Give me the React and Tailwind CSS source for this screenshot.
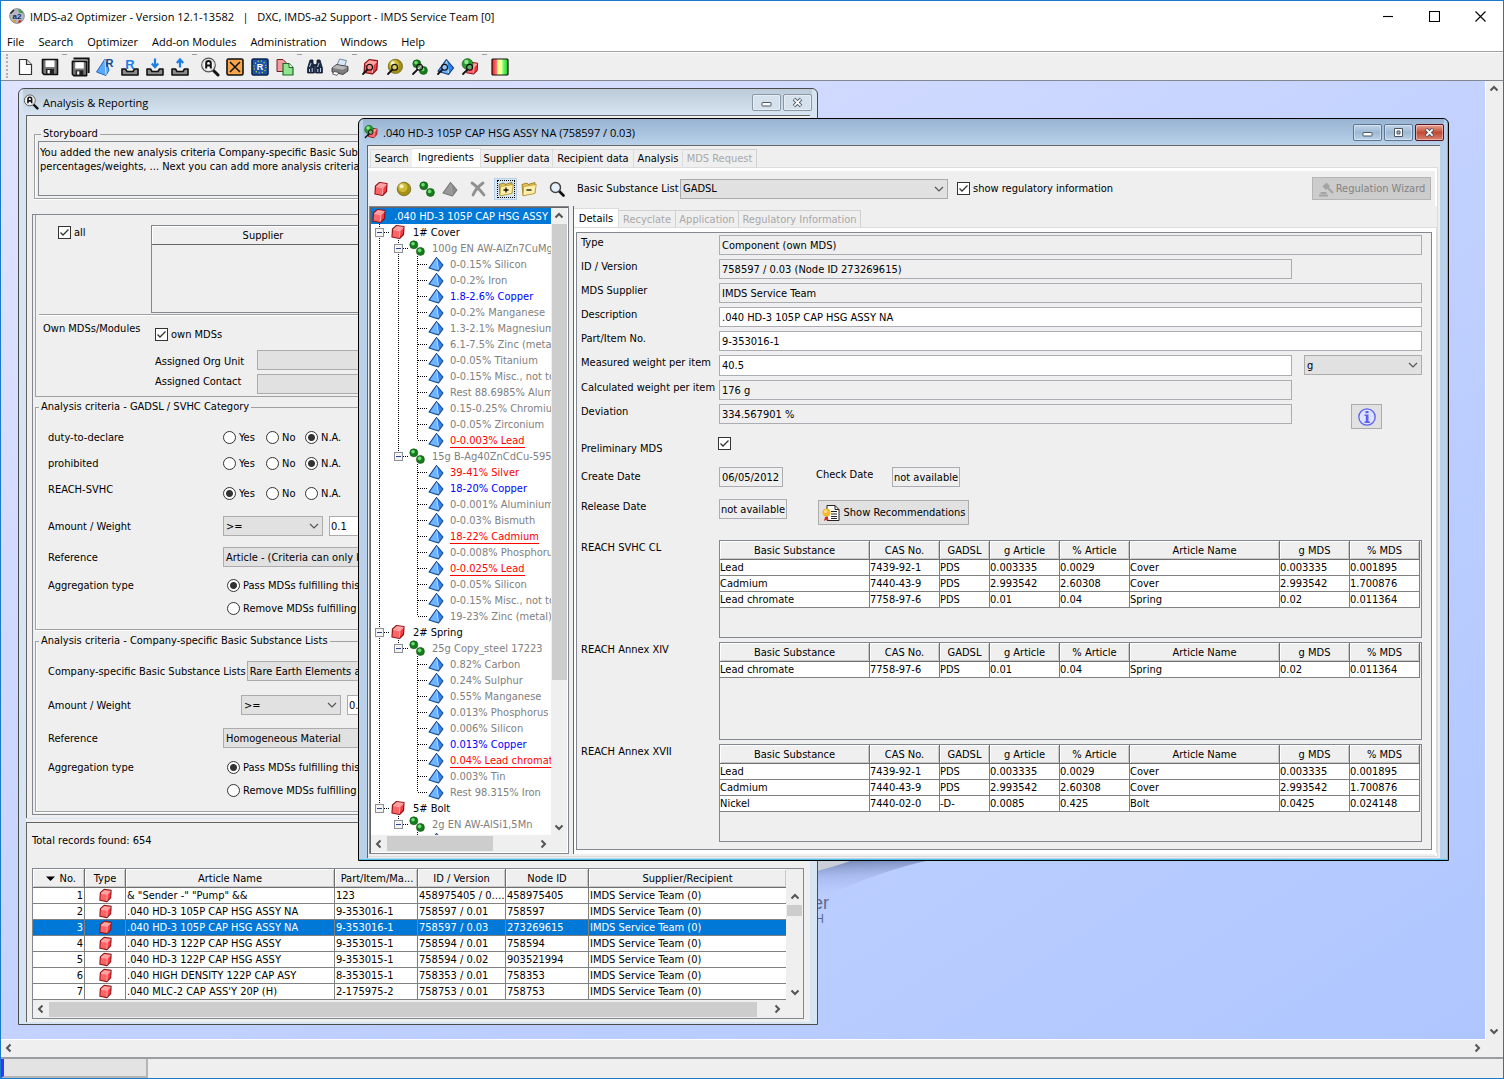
import { useState } from "react";

/* ---------- icons ---------- */

function Svg({ size = 16, box = 16, className = "", children }) {
  return (
    <svg width={size} height={size} viewBox={`0 0 ${box} ${box}`} className={`shrink-0 ${className}`} aria-hidden="true">
      {children}
    </svg>
  );
}

const CubeShape = () => (
  <g strokeLinejoin="round">
    <path d="M2.5 5 6.5 1.5 14 2.5 13.5 10.5 9.5 14.5 2 13Z" fill="#f43c42" stroke="#8e1418" strokeWidth="1.2" />
    <path d="M3.2 5.2 6.8 2.1 13.4 3.1 10 6.3Z" fill="#ffa3a3" />
    <path d="M3.2 6 9.4 7 9 13.7 2.7 12.4Z" fill="#ff6468" />
    <path d="M3.2 5.6 9.9 6.8 13.6 3.3M9.9 6.8 9.4 13.6" fill="none" stroke="#ffd0d0" strokeWidth="0.8" />
  </g>
);

const PyramidShape = ({ gray }) => (
  <g strokeLinejoin="round">
    <path d="M8.5 1.5 1 12 10.5 15 15 9Z" fill={gray ? "#8a8a8a" : "#2e86ee"} stroke={gray ? "#777" : "#1b4683"} strokeWidth="1.1" />
    <path d="M8.3 2.8 2.2 11.7 9.8 14Z" fill={gray ? "#999" : "#6fb5ff"} />
    <path d="M8.7 2.6 10.4 13.6" stroke={gray ? "#aaa" : "#d8ecff"} strokeWidth="0.9" />
  </g>
);

const BallsShape = () => (
  <g>
    <circle cx="4.8" cy="4.8" r="4" fill="#177d1c" stroke="#0c4d10" strokeWidth="0.6" />
    <circle cx="4" cy="3.8" r="1.8" fill="#6fe070" />
    <circle cx="11.4" cy="11.4" r="4" fill="#177d1c" stroke="#0c4d10" strokeWidth="0.6" />
    <circle cx="10.6" cy="10.4" r="1.8" fill="#6fe070" />
  </g>
);

const BallShape = () => (
  <g>
    <circle cx="8" cy="8" r="6.8" fill="#a39016" stroke="#5d5208" strokeWidth="0.6" />
    <circle cx="6.8" cy="6.6" r="4.6" fill="#cdbb3c" />
    <circle cx="5.6" cy="5.2" r="2" fill="#fbf6c0" />
  </g>
);

const Lens = () => (
  <g>
    <path d="M7.4 12.6 3 17" stroke="#111" strokeWidth="1.8" strokeLinecap="round" />
    <circle cx="9.6" cy="10.2" r="2.9" fill="#ffffff44" stroke="#111" strokeWidth="1.2" />
  </g>
);

const Cube = () => <Svg><CubeShape /></Svg>;
const Pyramid = ({ gray }) => <Svg><PyramidShape gray={gray} /></Svg>;
const Balls = () => <Svg><BallsShape /></Svg>;
const Ball = () => <Svg><BallShape /></Svg>;

const LensCube = () => <Svg size={20} box={20}><g transform="translate(2 1) scale(1.1)"><CubeShape /></g><Lens /></Svg>;
const LensBall = () => <Svg size={20} box={20}><g transform="translate(2 1) scale(1.05)"><BallShape /></g><Lens /></Svg>;
const LensBalls = () => <Svg size={20} box={20}><g transform="translate(2 2)"><BallsShape /></g><Lens /></Svg>;
const LensPyramid = () => <Svg size={20} box={20}><g transform="translate(2 1) scale(1.1)"><PyramidShape /></g><Lens /></Svg>;

function LensMixed({ size = 20 }) {
  return (
    <Svg size={size} box={20}>
      <g transform="translate(5 4) scale(0.9)"><CubeShape /></g>
      <circle cx="7.5" cy="7" r="5.4" fill="#2c9a30" stroke="#0c4d10" strokeWidth="0.6" />
      <circle cx="6.4" cy="5" r="2.2" fill="#8bea8b" />
      <Lens />
    </Svg>
  );
}

function ReportLens({ size = 20 }) {
  return (
    <Svg size={size} box={20}>
      <path d="M12.5 12.5 18 18" stroke="#111" strokeWidth="3" strokeLinecap="round" />
      <circle cx="8.5" cy="8" r="6.8" fill="#fff" stroke="#555" strokeWidth="1.2" />
      <circle cx="8.5" cy="8" r="5.4" fill="none" stroke="#ccc" strokeWidth="0.8" />
      <path d="M6.2 11.5V6.2Q6.2 4 8.5 4T10.8 6.2V11.5M6.2 8.6H10.8" fill="none" stroke="#111" strokeWidth="2" />
    </Svg>
  );
}

const AppLogo = () => (
  <Svg size={16}>
    <circle cx="8" cy="8" r="7.4" fill="#b4b9c0" stroke="#70757c" strokeWidth="0.7" />
    <path d="M9 1.2A7 7 0 0 1 14.4 5.4L10 4.4Z" fill="#45a049" />
    <path d="M3 12.6A7 7 0 0 0 7 15L7 12Z" fill="#d9a21b" />
    <path d="M9 15A7 7 0 0 0 13 12.8L10 12Z" fill="#c22" />
    <path d="M1.5 5.5 5 2" stroke="#222" strokeWidth="1.4" />
    <text x="8" y="11" fontSize="8" fontWeight="700" textAnchor="middle" fill="#14246b" fontFamily="Liberation Sans, sans-serif">a2</text>
  </Svg>
);

const NewDoc = () => (
  <Svg size={20} box={20}>
    <path d="M4.5 2.5H11.5L16.5 7.5V17.5H4.5Z" fill="#fff" stroke="#333" strokeWidth="1.2" />
    <path d="M11.5 2.5V7.5H16.5" fill="#ddd" stroke="#333" strokeWidth="1.2" />
  </Svg>
);

const DiskShape = () => (
  <g>
    <path d="M2.5 2.5H17.5V17.5H4L2.5 16Z" fill="#777" stroke="#111" strokeWidth="1.6" strokeLinejoin="round" />
    <path d="M5.5 3.4H14.5V10H5.5Z" fill="#fff" />
    <path d="M6 12H14V17H6Z" fill="#222" />
    <path d="M7.5 13H9.8V16.4H7.5Z" fill="#fff" />
  </g>
);
const Save = () => <Svg size={20} box={20}><DiskShape /></Svg>;
const SaveAll = () => (
  <Svg size={20} box={20}>
    <path d="M3.5 1.5H18.6V16" fill="none" stroke="#111" strokeWidth="2" />
    <g transform="translate(0 2) scale(0.95)"><DiskShape /></g>
  </Svg>
);

const PyramidR = () => (
  <Svg size={20} box={20}>
    <path d="M10 2 1.5 15 11 18.5 14 13Z" fill="#5aa9fa" stroke="#2567b5" />
    <path d="M10 2.5 11 18" stroke="#c9e4ff" />
    <text x="14.5" y="10" fontSize="11" fontWeight="700" textAnchor="middle" fill="#14497f" fontFamily="Liberation Sans, sans-serif">R</text>
  </Svg>
);

function Tray({ children }) {
  return (
    <Svg size={20} box={20}>
      <path d="M2 12H5.5L7 14.5H13L14.5 12H18V18H2Z" fill="#8c8c8c" stroke="#111" strokeWidth="1.6" strokeLinejoin="round" />
      {children}
    </Svg>
  );
}
const TrayR = () => <Tray><text x="10" y="11.5" fontSize="13" fontWeight="700" textAnchor="middle" fill="#1b7fe6" fontFamily="Liberation Sans, sans-serif">R</text></Tray>;
const TrayDown = () => <Tray><path d="M10 1.5V9M6.8 6.5 10 10 13.2 6.5" fill="none" stroke="#1b7fe6" strokeWidth="2.2" /></Tray>;
const TrayUp = () => <Tray><path d="M10 10.5V3.5M6.8 6 10 2.5 13.2 6" fill="none" stroke="#1b7fe6" strokeWidth="2.2" /></Tray>;

const OrangeX = () => (
  <Svg size={20} box={20}>
    <rect x="2" y="2" width="16" height="16" rx="1.5" fill="#f7a54a" stroke="#111" strokeWidth="1.6" />
    <path d="M5 5 15 15M15 5 5 15" stroke="#111" strokeWidth="1.5" />
  </Svg>
);
const EuR = () => (
  <Svg size={20} box={20}>
    <rect x="2" y="2" width="16" height="16" rx="1.5" fill="#1a56a8" stroke="#0c2350" strokeWidth="1.6" />
    <circle cx="10" cy="10" r="6" fill="none" stroke="#f2d63c" strokeWidth="1.1" strokeDasharray="1.1 2.04" />
    <text x="10" y="13.2" fontSize="9" fontWeight="700" textAnchor="middle" fill="#fff" fontFamily="Liberation Sans, sans-serif">R</text>
  </Svg>
);
const Docs = () => (
  <Svg size={20} box={20}>
    <path d="M2 2.5H8L11 5.5V14.5H2Z" fill="#f49aa0" stroke="#6b2327" />
    <path d="M8 6.5H14L18 10.5V18H8Z" fill="#8fe58f" stroke="#1f6b26" strokeWidth="1.2" />
    <path d="M14 6.5V10.5H18" fill="#fff" stroke="#1f6b26" />
  </Svg>
);
const Binoculars = () => (
  <Svg size={20} box={20}>
    <path d="M5 3H8V6L9.4 9V16H2.6V11ZM15 3H12V6L10.6 9V16H17.4V11Z" fill="#1c2c48" stroke="#0b1524" strokeWidth="0.8" />
    <path d="M4.5 10 6 6M14 6 12.5 10M4.5 12V15M12.8 12V15M7.2 11V15M15.5 11V15" stroke="#b8c8e6" strokeWidth="1" />
    <path d="M8.5 8H11.5" stroke="#0b1524" strokeWidth="1.6" />
  </Svg>
);
const Printer = () => (
  <Svg size={20} box={20}>
    <path d="M7 8 9.5 2 16.5 3.5 14.5 9.5Z" fill="#d8e8fa" stroke="#6d7f95" strokeWidth="0.9" />
    <path d="M2 11 6.5 7.5 18 9.5V14L13 17.5 2 15Z" fill="#7d7d7d" stroke="#3c3c3c" strokeWidth="0.9" />
    <path d="M2.5 11 6.6 8 17.4 9.9 13 12.8Z" fill="#b8b8b8" />
    <path d="M4 14.5 9 15.6 7 18.3 2.5 17Z" fill="#fff" stroke="#444" strokeWidth="0.8" />
  </Svg>
);
const Spectrum = () => (
  <Svg size={20} box={20}>
    <defs>
      <linearGradient id="spectrum">
        <stop offset="0" stopColor="#ff1414" />
        <stop offset="0.3" stopColor="#ff8080" />
        <stop offset="0.36" stopColor="#ffff70" />
        <stop offset="0.6" stopColor="#ffffb0" />
        <stop offset="0.68" stopColor="#7cff7c" />
        <stop offset="1" stopColor="#12d012" />
      </linearGradient>
    </defs>
    <rect x="2" y="2" width="16" height="16" rx="1" fill="url(#spectrum)" stroke="#111" strokeWidth="1.2" />
  </Svg>
);
const GrayX = () => (
  <Svg><path d="M2 2Q8 6 14 14M13 2Q6 7 3 14" fill="none" stroke="#909090" strokeWidth="2.8" strokeLinecap="round" /></Svg>
);
const Folder = ({ plus }) => (
  <Svg>
    <path d="M1 3.5 6 2 7 3.5 14 1.5V12L2 14.5Z" fill="#e9c65a" stroke="#8a6d1a" strokeWidth="0.8" />
    <path d="M2.5 5.5 15.3 3.5 13.8 12.5 2 14.8Z" fill="#fdeea8" stroke="#b5942f" strokeWidth="0.8" />
    <path d={plus ? "M5.5 9H10.5M8 6.5V11.5" : "M5.5 9H10.5"} stroke="#111" strokeWidth="1.3" />
  </Svg>
);
const SearchLens = () => (
  <Svg>
    <path d="M10 10 14.5 14.5" stroke="#111" strokeWidth="2.6" strokeLinecap="round" />
    <circle cx="6.5" cy="6.5" r="5" fill="#e4f1fb" stroke="#444" strokeWidth="1.5" />
  </Svg>
);
const Gavel = () => (
  <Svg>
    <path d="M4.5 5.5 8.5 1.5 12 5 8 9Z" fill="#a4a4a4" />
    <path d="M9.5 6.5 15 12" stroke="#a4a4a4" strokeWidth="2.2" />
    <path d="M1 14.5H10M2.5 12H8.5" stroke="#a4a4a4" strokeWidth="1.8" />
  </Svg>
);
const Certificate = () => (
  <Svg size={18} box={18}>
    <path d="M5 1.5H13L17 5.5V16.5H5Z" fill="#fff" stroke="#222" />
    <path d="M13 1.5V5.5H17" fill="none" stroke="#222" />
    <path d="M9 7.5H15M9 10H15M9 12.5H15M9 14.5H15" stroke="#222" />
    <circle cx="4.5" cy="8.5" r="4" fill="#f5b82a" />
    <circle cx="3.6" cy="7.4" r="1.6" fill="#fde28a" />
    <path d="M3 13 2 17 4.5 15.5 6.5 17 6 13Z" fill="#d22" />
  </Svg>
);
const Info = () => (
  <Svg size={20} box={20}>
    <circle cx="10" cy="10" r="8.2" fill="#dfe2ff" stroke="#5a62e8" strokeWidth="1.3" />
    <path d="M8.5 4H11.5V6.2H8.5ZM7.5 7.6H11.5V14.6H13V16H7.5V14.6H8.8V9H7.5Z" fill="#5a62f0" />
  </Svg>
);

const arrows = { up: "M1.5 6.5 5 3 8.5 6.5", down: "M1.5 3.5 5 7 8.5 3.5", left: "M6.5 1.5 3 5 6.5 8.5", right: "M3.5 1.5 7 5 3.5 8.5" };

/* ---------- small controls ---------- */

function Arrow({ dir, className = "" }) {
  return (
    <button type="button" aria-label={`Scroll ${dir}`} className={`flex size-4 shrink-0 items-center justify-center ${className}`}>
      <Svg size={10} box={10}><path d={arrows[dir]} fill="none" stroke="#555" strokeWidth="2" /></Svg>
    </button>
  );
}

function Select({ id, value, label, className = "" }) {
  return (
    <span className={`relative inline-block h-5 shrink-0 ${className}`}>
      <select id={id} aria-label={label} className="h-5 w-full appearance-none border border-[#acacac] bg-[#e1e1e1] pr-5 pl-[2px] text-black">
        <option>{value}</option>
      </select>
      <Svg size={10} box={10} className="pointer-events-none absolute top-[5px] right-1">
        <path d="M1 3 5 7 9 3" fill="none" stroke="#555" strokeWidth="1.2" />
      </Svg>
    </span>
  );
}

function CheckBox({ label, ariaLabel }) {
  const [on, setOn] = useState(true);
  return (
    <label className="flex items-center gap-[3px] whitespace-nowrap">
      <span className="grid size-[13px] shrink-0">
        <input type="checkbox" aria-label={ariaLabel} checked={on} onChange={() => setOn(!on)} className="size-[13px] appearance-none border border-[#333] bg-white [grid-area:1/1]" />
        {on && (
          <Svg size={13} box={13} className="pointer-events-none [grid-area:1/1]">
            <path d="M2.5 6.5 5 9 10.5 3.5" fill="none" stroke="#333" strokeWidth="1.3" />
          </Svg>
        )}
      </span>
      {label}
    </label>
  );
}

function Radio({ name, label, checked }) {
  return (
    <label className="flex items-center gap-[3px] whitespace-nowrap">
      <input type="radio" name={name} defaultChecked={checked} className="size-[13px] shrink-0 appearance-none rounded-full border border-[#333] bg-white checked:bg-[radial-gradient(circle,#333_0_3px,#fff_4px)]" />
      {label}
    </label>
  );
}

function GroupBox({ title, className = "", children }) {
  return (
    <fieldset className={`border border-[#a0a0a0] shadow-[inset_1px_0_0_#fff,0_1px_0_#fff] ${className}`}>
      <legend className="ml-[3px] px-[2px] leading-[14px]">{title}</legend>
      {children}
    </fieldset>
  );
}

function YesNo({ name, pick }) {
  return (
    <div className="grid grid-cols-[43px_39px_43px]">
      {["Yes", "No", "N.A."].map((o) => <Radio key={o} name={name} label={o} checked={o === pick} />)}
    </div>
  );
}

function Aggregation({ name }) {
  return (
    <>
      <div className="flex h-[26px] items-center">
        <span className="w-[179px]">Aggregation type</span>
        <Radio name={name} label="Pass MDSs fulfilling this criteria" checked />
      </div>
      <div className="flex h-5 items-center pl-[179px]">
        <Radio name={name} label="Remove MDSs fulfilling this criteria" />
      </div>
    </>
  );
}

function TitleButton({ kind, active }) {
  const tone = kind === "close" && active
    ? "border-[#5a1420] bg-linear-to-b from-[#e8a598] via-[#c04a32] to-[#d98070]"
    : active
      ? "border-[#5d7692] bg-linear-to-b from-[#c3d5e8] via-[#9db9d4] to-[#bcd2e8]"
      : "border-[#8b97a5] bg-[#d5e1ec]";
  return (
    <button type="button" aria-label={kind} className={`flex h-[17px] w-[29px] items-center justify-center rounded-[2px] border shadow-[inset_0_0_0_1px_#ffffff66] ${tone}`}>
      <Svg size={11} box={11}>
        {kind === "minimize" && <rect x="1" y="5.5" width="9" height="3.5" rx="0.5" fill="#fff" stroke="#4d5562" />}
        {kind === "maximize" && <path d="M1.5 1.5H9.5V9.5H1.5ZM4 4H7V7H4Z" fill="#fff" fillRule="evenodd" stroke="#4d5562" />}
        {kind === "close" && (
          <g>
            <path d="M2 2 9 9M9 2 2 9" stroke="#4d5562" strokeWidth="3.6" />
            <path d="M2.4 2.4 8.6 8.6M8.6 2.4 2.4 8.6" stroke="#fff" strokeWidth="1.8" />
          </g>
        )}
      </Svg>
    </button>
  );
}

const headCell = "h-[19px] truncate border-r border-b border-[#6f6f6f] bg-[#efefef] px-1 text-center font-normal shadow-[inset_1px_1px_0_#fff,inset_-1px_-1px_0_#c8c8c8]";

/* ---------- Analysis & Reporting window ---------- */

const records = [
  ["& \"Sender -\" \"Pump\" &&", "123", "458975405 / 0.01", "458975405"],
  [".040 HD-3 105P CAP HSG ASSY NA", "9-353016-1", "758597 / 0.01", "758597"],
  [".040 HD-3 105P CAP HSG ASSY NA", "9-353016-1", "758597 / 0.03", "273269615"],
  [".040 HD-3 122P CAP HSG ASSY", "9-353015-1", "758594 / 0.01", "758594"],
  [".040 HD-3 122P CAP HSG ASSY", "9-353015-1", "758594 / 0.02", "903521994"],
  [".040 HIGH DENSITY 122P CAP ASY", "8-353015-1", "758353 / 0.01", "758353"],
  [".040 MLC-2 CAP ASS'Y 20P (H)", "2-175975-2", "758753 / 0.01", "758753"],
];

function ResultTable() {
  return (
    <div className="border border-[#828790]">
      <div className="flex">
        <div className="min-w-0 flex-1">
          <table className="w-full table-fixed border-separate border-spacing-0 bg-white">
            <colgroup>
              <col className="w-[52px]" />
              <col className="w-[41px]" />
              <col className="w-[209px]" />
              <col className="w-[83px]" />
              <col className="w-[88px]" />
              <col className="w-[83px]" />
              <col />
            </colgroup>
            <thead>
              <tr>
                <th className={headCell}>
                  <span className="flex items-center justify-end gap-[5px] pr-1">
                    <Svg size={9} box={9}><path d="M0 2.5H9L4.5 7Z" /></Svg>No.
                  </span>
                </th>
                {["Type", "Article Name"].map((h) => <th key={h} className={headCell}>{h}</th>)}
                <th className={`${headCell} pr-0 pl-[2px]`}>Part/Item/Ma...</th>
                {["ID / Version", "Node ID"].map((h) => <th key={h} className={headCell}>{h}</th>)}
                <th className={`${headCell} border-r-0`}>Supplier/Recipient</th>
              </tr>
            </thead>
            <tbody>
              {records.map((r, i) => (
                <tr key={i} className={i === 2 ? "bg-[#0078d7] text-white" : ""}>
                  <td className="h-4 border-r border-b border-[#808080] pr-px text-right">{i + 1}</td>
                  <td className="h-4 border-r border-b border-[#808080]">
                    <div className="flex h-[15px] items-center justify-center"><Svg size={15}><CubeShape /></Svg></div>
                  </td>
                  {r.map((c, k) => (
                    <td key={k} className="h-4 truncate border-r border-b border-[#808080] pl-px">{c}</td>
                  ))}
                  <td className="h-4 border-b border-[#808080] pl-px">IMDS Service Team (0)</td>
                </tr>
              ))}
            </tbody>
          </table>
        </div>
        <div className="flex w-[17px] flex-col items-center bg-[#efefef] pt-5">
          <Arrow dir="up" />
          <div className="h-[11px] w-[15px] bg-[#cdcdcd]" />
          <Arrow dir="down" className="mt-auto" />
        </div>
      </div>
      <div className="flex h-[18px] items-center bg-[#efefef]">
        <Arrow dir="left" />
        <div className="h-[15px] flex-1 bg-[#cdcdcd]" />
        <Arrow dir="right" className="mr-[18px] ml-3" />
      </div>
    </div>
  );
}

function AnalysisWindow() {
  return (
    <section className="absolute top-[7px] left-[17px] flex h-[937px] w-[800px] flex-col rounded-t-[6px] border border-[#4b4b4b] bg-[#d7e4f2] pr-[7px] pb-[2px] pl-[7px]">
      <header className="-mr-[2px] -ml-[3px] flex h-[26px] shrink-0 items-center bg-linear-to-b from-[#bccbd9] to-[#d7e4f2]">
        <ReportLens size={16} />
        <h2 className="ml-1 flex-1 font-['Open_Sans','Noto_Sans',sans-serif]">Analysis &amp; Reporting</h2>
        <span className="flex gap-[2px]">
          <TitleButton kind="minimize" />
          <TitleButton kind="close" />
        </span>
      </header>
      <div className="overflow-hidden border-t border-l border-[#646464] bg-[#efefef] pt-[11px] pb-[3px]">
        <GroupBox title="Storyboard" className="mr-1 ml-[7px] px-[3px] pb-[2px]">
          <textarea
            readOnly
            aria-label="Storyboard"
            rows={3}
            className="block h-[55px] w-full resize-none overflow-hidden border border-[#828790] bg-transparent px-px py-1 leading-[14px] whitespace-pre"
            value={"You added the new analysis criteria Company-specific Basic Substance Lists\npercentages/weights, ... Next you can add more analysis criteria or start"}
          />
        </GroupBox>

        <div className="mt-[15px] mr-1 ml-[5px] border border-[#828790] pb-[2px] pl-[2px]">
          <div className="border-b border-l border-[#a0a0a0]">
            <div className="ml-[3px] flex h-[100px] items-start border-b border-[#a0a0a0] pt-[10px] shadow-[0_1px_0_#fff]">
              <div className="ml-[19px] w-[93px]"><CheckBox label="all" /></div>
              <table className="h-[88px] flex-1 border-separate border-spacing-0 border border-[#828790]">
                <thead>
                  <tr>
                    <th className="h-[19px] w-[222px] border-b border-[#646464] text-center font-normal shadow-[inset_1px_1px_0_#fff]">Supplier</th>
                    <th className="h-[19px] border-b border-l border-[#646464] font-normal">Org Unit</th>
                  </tr>
                </thead>
                <tbody><tr><td colSpan={2} /></tr></tbody>
              </table>
            </div>
            <div className="flex pt-[6px] pb-[2px] pl-[7px]">
              <span className="w-[112px]">Own MDSs/Modules</span>
              <div className="flex-1">
                <div className="pt-[6px] pb-2"><CheckBox label="own MDSs" /></div>
                <label className="flex h-6 items-start">
                  <span className="w-[102px] pt-1">Assigned Org Unit</span>
                  <input disabled className="h-5 flex-1 border border-[#acacac] bg-[#e1e1e1]" />
                </label>
                <label className="flex h-5 items-start">
                  <span className="w-[102px]">Assigned Contact</span>
                  <input disabled className="h-5 flex-1 border border-[#acacac] bg-[#e1e1e1]" />
                </label>
              </div>
            </div>
          </div>

          <GroupBox title="Analysis criteria - GADSL / SVHC Category" className="mt-[3px]">
            <div className="pt-[10px] pb-[11px] pl-3">
              <div className="flex h-[26px] items-center"><span className="w-[175px]">duty-to-declare</span><YesNo name="duty" pick="N.A." /></div>
              <div className="flex h-[26px] items-center"><span className="w-[175px]">prohibited</span><YesNo name="prohibited" pick="N.A." /></div>
              <div className="flex h-[34px] items-center"><span className="w-[175px] pb-2">REACH-SVHC</span><YesNo name="svhc" pick="Yes" /></div>
              <div className="flex h-8 items-center">
                <span className="w-[175px]">Amount / Weight</span>
                <Select value=">=" label="Amount operator" className="w-[100px]" />
                <input aria-label="Amount" defaultValue="0.1" className="ml-[6px] h-5 w-20 border border-[#acacac] bg-white px-px" />
              </div>
              <div className="flex h-[30px] items-center">
                <span className="w-[175px]">Reference</span>
                <Select value="Article - (Criteria can only be applied to articles)" label="Reference" className="w-[300px]" />
              </div>
              <Aggregation name="agg1" />
            </div>
          </GroupBox>

          <GroupBox title="Analysis criteria - Company-specific Basic Substance Lists" className="mt-1">
            <div className="pt-2 pb-[11px] pl-3">
              <div className="flex h-[30px] items-center">
                <span className="pr-px whitespace-nowrap">Company-specific Basic Substance Lists</span>
                <Select value="Rare Earth Elements and others" label="Company list" className="w-[300px]" />
              </div>
              <div className="flex h-[38px] items-center">
                <span className="w-[193px]">Amount / Weight</span>
                <Select value=">=" label="Weight operator" className="w-[100px]" />
                <input aria-label="Weight" defaultValue="0.1" className="ml-[6px] h-5 w-20 border border-[#acacac] bg-white px-px" />
              </div>
              <div className="mb-[2px] flex h-7 items-center">
                <span className="w-[175px]">Reference</span>
                <Select value="Homogeneous Material" label="Material reference" className="w-[300px]" />
              </div>
              <Aggregation name="agg2" />
            </div>
          </GroupBox>
        </div>
      </div>
      <div className="mt-1 flex-1 border-t border-l border-[#646464] bg-[#efefef] pr-[6px] pl-[5px] shadow-[0_-3px_0_#efefef]">
        <p className="pt-[10px] pb-5">Total records found: 654</p>
        <ResultTable />
      </div>
    </section>
  );
}

/* ---------- ingredients tree ---------- */

const tree = [
  ["1# Cover", [
    ["100g EN AW-AlZn7CuMg", ["0-0.15% Silicon", "0-0.2% Iron", "b:1.8-2.6% Copper", "0-0.2% Manganese", "1.3-2.1% Magnesium", "6.1-7.5% Zinc (metal)", "0-0.05% Titanium", "0-0.15% Misc., not to declare", "Rest 88.6985% Aluminium", "0.15-0.25% Chromium", "0-0.05% Zirconium", "u:0-0.003% Lead"]],
    ["15g B-Ag40ZnCdCu-595/630", ["r:39-41% Silver", "b:18-20% Copper", "0-0.001% Aluminium", "0-0.03% Bismuth", "u:18-22% Cadmium", "0-0.008% Phosphorus", "u:0-0.025% Lead", "0-0.05% Silicon", "0-0.15% Misc., not to declare", "19-23% Zinc (metal)"]],
  ]],
  ["2# Spring", [
    ["25g Copy_steel 17223", ["0.82% Carbon", "0.24% Sulphur", "0.55% Manganese", "0.013% Phosphorus", "0.006% Silicon", "b:0.013% Copper", "u:0.04% Lead chromate", "0.003% Tin", "Rest 98.315% Iron"]],
  ]],
  ["5# Bolt", [
    ["2g EN AW-AlSi1,5Mn", ["0.5% Silicon"]],
  ]],
];

const tones = {
  b: "text-[#0000ff]",
  r: "text-[#ff0000]",
  u: "text-[#ff0000] border-b border-[#ff0000]",
};

// one 19px step of the tree's dotted guide lines
function Guide({ node, line, last, box }) {
  return (
    <svg width="19" height="16" className="shrink-0" shapeRendering="crispEdges" aria-hidden="true">
      <g stroke="#000" strokeDasharray="1 1">
        {line && <path d="M8.5 0V16" />}
        {node && <path d={last ? "M8.5 0V8" : "M8.5 0V16"} />}
        {node && <path d="M9 8.5H18" />}
      </g>
      {box && (
        <g>
          <rect x="4.5" y="4.5" width="8" height="8" fill="#f4f4f4" stroke="#8b9097" />
          <path d="M6 8.5H11" stroke="#24479b" />
        </g>
      )}
    </svg>
  );
}

function Tree() {
  const rows = [];
  tree.forEach(([part, mats], i) => {
    const lastPart = i === tree.length - 1;
    rows.push(
      <li key={part} className="flex h-4 items-center">
        <Guide node box last={lastPart} /><Cube /><span className="ml-[7px]">{part}</span>
      </li>
    );
    mats.forEach(([mat, subs], j) => {
      const lastMat = j === mats.length - 1;
      rows.push(
        <li key={part + mat} className="flex h-4 items-center text-[#808080]">
          <Guide line={!lastPart} /><Guide node box last={lastMat} /><Balls /><span className="ml-[7px]">{mat}</span>
        </li>
      );
      subs.forEach((s, k) => {
        const coded = s[1] === ":";
        rows.push(
          <li key={part + mat + s} className="flex h-4 items-center text-[#808080]">
            <Guide line={!lastPart} /><Guide line={!lastMat} /><Guide node last={k === subs.length - 1} />
            <Pyramid />
            <span className={`ml-[6px] h-[15px] ${coded ? tones[s[0]] : ""}`}>{coded ? s.slice(2) : s}</span>
          </li>
        );
      });
    });
  });
  return (
    <div className="flex w-[200px] shrink-0 flex-col border border-[#828790] bg-white p-px shadow-[inset_1px_1px_0_#646464]">
      <div className="flex min-h-0 flex-1">
        <ul className="min-w-0 flex-1 overflow-hidden whitespace-nowrap">
          <li className="flex h-4 items-center bg-[#0078d7] text-white">
            <Cube /><span className="ml-[7px]">.040 HD-3 105P CAP HSG ASSY NA</span>
          </li>
          {rows}
        </ul>
        <div className="flex w-4 flex-col items-center bg-[#efefef]">
          <Arrow dir="up" />
          <div className="h-[456px] w-[15px] bg-[#cdcdcd]" />
          <Arrow dir="down" className="mt-auto" />
        </div>
      </div>
      <div className="flex h-[17px] items-center bg-[#efefef]">
        <Arrow dir="left" />
        <div className="h-[15px] w-[106px] bg-[#cdcdcd]" />
        <Arrow dir="right" className="mr-4 ml-auto" />
      </div>
    </div>
  );
}

/* ---------- details ---------- */

function Field({ label, value, editable, short, side, rowClass = "h-6", inputClass = "h-5" }) {
  return (
    <div className={`flex items-start ${rowClass}`}>
      <label className="flex min-w-0 flex-1">
        <span className="w-[138px] shrink-0 whitespace-nowrap">{label}</span>
        <input readOnly={!editable} defaultValue={value} className={`min-w-0 flex-1 border border-[#abadb3] px-[2px] ${inputClass} ${editable ? "bg-white" : "bg-[#efefef]"}`} />
      </label>
      {short && <div className="w-[130px] shrink-0 pl-3">{side}</div>}
    </div>
  );
}

const columns = ["Basic Substance", "CAS No.", "GADSL", "g Article", "% Article", "Article Name", "g MDS", "% MDS"];

const reach = [
  ["REACH SVHC CL", [
    ["Lead", "7439-92-1", "PDS", "0.003335", "0.0029", "Cover", "0.003335", "0.001895"],
    ["Cadmium", "7440-43-9", "PDS", "2.993542", "2.60308", "Cover", "2.993542", "1.700876"],
    ["Lead chromate", "7758-97-6", "PDS", "0.01", "0.04", "Spring", "0.02", "0.011364"],
  ]],
  ["REACH Annex XIV", [
    ["Lead chromate", "7758-97-6", "PDS", "0.01", "0.04", "Spring", "0.02", "0.011364"],
  ]],
  ["REACH Annex XVII", [
    ["Lead", "7439-92-1", "PDS", "0.003335", "0.0029", "Cover", "0.003335", "0.001895"],
    ["Cadmium", "7440-43-9", "PDS", "2.993542", "2.60308", "Cover", "2.993542", "1.700876"],
    ["Nickel", "7440-02-0", "-D-", "0.0085", "0.425", "Bolt", "0.0425", "0.024148"],
  ]],
];

function ReachTable({ title, rows }) {
  return (
    <div className="flex">
      <h4 className="w-[138px] shrink-0">{title}</h4>
      <div className="h-[98px] min-w-0 flex-1 border border-[#828790] pr-px">
        <table aria-label={title} className="w-full table-fixed border-separate border-spacing-0">
          <colgroup>
            <col className="w-[150px]" />
            <col className="w-[70px]" />
            <col className="w-[50px]" />
            <col className="w-[70px]" />
            <col className="w-[70px]" />
            <col />
            <col className="w-[70px]" />
            <col className="w-[70px]" />
          </colgroup>
          <thead>
            <tr>{columns.map((c) => <th key={c} className={headCell}>{c}</th>)}</tr>
          </thead>
          <tbody>
            {rows.map((r) => (
              <tr key={r[0]} className="bg-white">
                {r.map((c, i) => <td key={i} className="h-4 truncate border-r border-b border-[#808080]">{c}</td>)}
              </tr>
            ))}
          </tbody>
        </table>
      </div>
    </div>
  );
}

function Details() {
  return (
    <div className="min-w-0 flex-1 border-l border-[#646464] bg-white">
      <nav className="flex h-[21px] items-end bg-[#efefef] pt-[2px]" role="tablist">
        <button role="tab" aria-selected="true" className="h-[19px] w-[45px] border-t border-r border-[#dcdcdc] bg-white">Details</button>
        {[["Recyclate", "w-[57px]"], ["Application", "w-[63px]"], ["Regulatory Information", "w-[122px]"]].map(([t, w]) => (
          <button key={t} role="tab" disabled className={`h-[17px] border-t border-r border-[#d0d0d0] whitespace-nowrap text-[#a8a8a8] ${w}`}>{t}</button>
        ))}
      </nav>
      <div className="border-t border-r border-[#dcdcdc] bg-white pt-1 pr-1 pb-[3px] pl-[2px]">
        <div className="border border-[#828790] bg-[#efefef] pt-[2px] pr-[9px] pb-[7px] pl-1">
          <Field label="Type" value="Component (own MDS)" />
          <Field label="ID / Version" value="758597 / 0.03 (Node ID 273269615)" short />
          <Field label="MDS Supplier" value="IMDS Service Team" />
          <Field label="Description" value=".040 HD-3 105P CAP HSG ASSY NA" editable />
          <Field label="Part/Item No." value="9-353016-1" editable />
          <Field label="Measured weight per item" value="40.5" editable short rowClass="h-[25px]" inputClass="h-[21px]" side={<Select value="g" label="Unit" className="w-full" />} />
          <Field label="Calculated weight per item" value="176 g" short />
          <Field
            label="Deviation"
            value="334.567901 %"
            short
            rowClass="h-[33px]"
            side={
              <button type="button" aria-label="Information" className="ml-[47px] flex h-[25px] w-[31px] items-center justify-center border border-[#acacac] bg-[#e1e1e1]">
                <Info />
              </button>
            }
          />
          <div className="flex h-[30px] items-start">
            <span className="w-[137px] pt-1">Preliminary MDS</span>
            <CheckBox ariaLabel="Preliminary MDS" />
          </div>
          <div className="flex h-8 items-start">
            <span className="w-[138px] pt-[2px]">Create Date</span>
            <input readOnly aria-label="Create Date" value="06/05/2012" className="h-5 w-16 border border-[#abadb3] px-[2px]" />
            <span className="ml-[33px] w-[76px]">Check Date</span>
            <input readOnly aria-label="Check Date" value="not available" className="h-5 w-[68px] border border-[#abadb3] px-px" />
          </div>
          <div className="flex h-[41px] items-start">
            <span className="w-[138px]">Release Date</span>
            <input readOnly aria-label="Release Date" value="not available" className="h-5 w-[68px] border border-[#abadb3] px-px" />
            <button type="button" className="mt-px ml-[31px] flex h-[25px] w-[151px] items-center justify-center gap-1 border border-[#acacac] bg-[#e1e1e1] whitespace-nowrap">
              <Certificate />Show Recommendations
            </button>
          </div>
          <div className="flex flex-col gap-1">
            {reach.map(([title, rows]) => <ReachTable key={title} title={title} rows={rows} />)}
          </div>
        </div>
      </div>
    </div>
  );
}

function IconButton({ label, active, className = "", children }) {
  return (
    <button type="button" aria-label={label} className={`flex h-[22px] w-[23px] items-center justify-center ${active ? "border border-[#b5d0e8] bg-[#d5e6f5] p-[2px]" : ""} ${className}`}>
      {active ? <span className="border border-dotted border-black">{children}</span> : children}
    </button>
  );
}

function DatasheetWindow() {
  return (
    <section className="absolute top-[37px] left-[357px] flex h-[743px] w-[1091px] flex-col rounded-t-[6px] border border-black bg-[#b9d1ea] pr-2 pb-[2px] pl-2 shadow-[inset_-1px_-1px_0_#4fc3e8]">
      <header className="-mr-1 -ml-1 flex h-[26px] shrink-0 items-center bg-linear-to-b from-[#98b4d2] to-[#b9d1ea]">
        <LensMixed size={16} />
        <h2 className="ml-1 flex-1 font-['Open_Sans','Noto_Sans',sans-serif]">.040 HD-3 105P CAP HSG ASSY NA (758597 / 0.03)</h2>
        <span className="flex gap-[2px]">
          <TitleButton kind="minimize" active />
          <TitleButton kind="maximize" active />
          <TitleButton kind="close" active />
        </span>
      </header>
      <div className="flex min-h-0 flex-1 flex-col border-t border-l border-[#646464] bg-[#efefef] pr-[2px] pb-px">
        <nav className="flex h-[21px] items-end pl-[2px]" role="tablist">
          <button role="tab" className="h-[18px] w-[42px] border-t border-l border-[#dcdcdc]">Search</button>
          <button role="tab" aria-selected="true" className="-mb-px h-5 w-[69px] border-t border-r border-[#dcdcdc] bg-white pb-[2px]">Ingredients</button>
          {[["Supplier data", "w-[72px]"], ["Recipient data", "w-[81px]"], ["Analysis", "w-[49px]"]].map(([t, w]) => (
            <button key={t} role="tab" className={`h-[18px] border-t border-r border-[#dcdcdc] whitespace-nowrap ${w}`}>{t}</button>
          ))}
          <button role="tab" disabled className="h-[18px] w-[74px] border-t border-r border-[#d0d0d0] whitespace-nowrap text-[#a8a8a8]">MDS Request</button>
        </nav>
        <div className="flex min-h-0 flex-1 flex-col border-t border-r border-b border-[#dcdcdc] bg-[#efefef] pb-[2px] pl-px shadow-[inset_0_3px_0_#fff,inset_-2px_0_0_#fff]">
          <div className="flex h-[38px] shrink-0 items-center pt-[3px] pr-[6px]">
            <IconButton label="Add component"><Cube /></IconButton>
            <IconButton label="Add semi-component"><Ball /></IconButton>
            <IconButton label="Add material"><Balls /></IconButton>
            <IconButton label="Add substance"><Pyramid gray /></IconButton>
            <IconButton label="Delete" className="ml-[5px]"><GrayX /></IconButton>
            <IconButton label="Expand all" active className="ml-[5px]"><Folder plus /></IconButton>
            <IconButton label="Collapse all"><Folder /></IconButton>
            <IconButton label="Find" className="ml-[5px]"><SearchLens /></IconButton>
            <label htmlFor="bsl" className="ml-[9px] w-[103px] whitespace-nowrap">Basic Substance List</label>
            <Select id="bsl" value="GADSL" className="mr-[9px] w-[268px]" />
            <CheckBox label="show regulatory information" />
            <button type="button" disabled className="ml-auto flex h-[23px] w-[119px] items-center justify-center gap-[2px] border border-[#b5b5b5] bg-[#cccccc] whitespace-nowrap text-[#838383]">
              <Gavel />Regulation Wizard
            </button>
          </div>
          <div className="flex min-h-0 flex-1 gap-1">
            <Tree />
            <Details />
          </div>
        </div>
      </div>
    </section>
  );
}

/* ---------- main frame ---------- */

const toolGroups = [
  [["New", NewDoc], ["Save", Save]],
  [["Save all", SaveAll], ["Release", PyramidR], ["Release to tray", TrayR], ["Import", TrayDown], ["Export", TrayUp]],
  [["Analysis", ReportLens], ["Exclude", OrangeX], ["REACH", EuR], ["Compare", Docs]],
  [["Find", Binoculars], ["Print", Printer]],
  [["Search component", LensCube], ["Search semi-component", LensBall], ["Search material", LensBalls], ["Search substance", LensPyramid], ["Search all", LensMixed]],
  [["Colours", Spectrum]],
];

const menus = ["File", "Search", "Optimizer", "Add-on Modules", "Administration", "Windows", "Help"];

export default function App() {
  return (
    <div className="flex h-screen flex-col overflow-hidden border border-[#1979ca] bg-[#efefef] font-['DejaVu_Sans_Condensed','DejaVu_Sans',sans-serif] text-[11px] leading-[15px] text-black">
      <header className="flex h-[30px] shrink-0 items-center bg-white pl-2 font-['Open_Sans','Noto_Sans',sans-serif]">
        <AppLogo />
        <h1 className="ml-[5px] flex-1 whitespace-pre">IMDS-a2 Optimizer - Version 12.1-13582   |   DXC, IMDS-a2 Support - IMDS Service Team [0]</h1>
        {["M0 5.5H10", "M0.5 0.5H10.5V10.5H0.5Z", "M0.5 0.5 10.5 10.5M10.5 0.5 0.5 10.5"].map((d, i) => (
          <button key={d} type="button" aria-label={["Minimize", "Maximize", "Close"][i]} className="flex h-full w-[46px] items-center justify-center">
            <Svg size={11} box={11}><path d={d} fill="none" stroke="#000" strokeWidth="1.1" /></Svg>
          </button>
        ))}
      </header>
      <nav className="flex h-[21px] shrink-0 items-center gap-[14px] border-b border-[#a0a0a0] bg-white pl-[6px] font-['Open_Sans','Noto_Sans',sans-serif]">
        {menus.map((m) => <button key={m} type="button">{m}</button>)}
      </nav>
      <div className="flex h-[29px] shrink-0 items-center border-b border-[#828790] pl-[5px] shadow-[inset_0_1px_0_#fff]">
        <span className="mr-1 h-6 border-l-2 border-dotted border-[#b0b0b0]" />
        {toolGroups.map((group, i) => (
          <div key={i} className="flex h-full items-center">
            {i > 0 && <span className="h-full w-[5px] pt-[2px]"><span className="block h-px bg-[#a0a0a0]" /></span>}
            {group.map(([label, Icon]) => (
              <button key={label} type="button" aria-label={label} title={label} className="flex h-full w-[25px] items-center justify-center pt-[2px]">
                <Icon />
              </button>
            ))}
          </div>
        ))}
      </div>
      <main className="grid min-h-0 flex-1 grid-cols-[1fr_18px] grid-rows-[1fr_18px]">
        <div className="relative overflow-hidden bg-linear-to-br from-[#e1e4ff] via-[#c3d2ff] to-[#aec6ff]">
          <div className="absolute top-[779px] left-[780px] text-[#5f6b8c]">
            <svg width="260" height="60" className="block" aria-hidden="true">
              <defs>
                <linearGradient id="shade" x1="0.2" y1="0" x2="0.35" y2="1">
                  <stop offset="0" stopColor="#6f7fae" />
                  <stop offset="0.4" stopColor="#9fb0e4" stopOpacity="0.7" />
                  <stop offset="1" stopColor="#bccdff" stopOpacity="0" />
                </linearGradient>
              </defs>
              <path d="M0 0H150Q100 10 36 40H0Z" fill="url(#shade)" />
              <path d="M0 0H72Q56 6 36 11L0 16Z" fill="#c9ced9" />
            </svg>
            <p className="-mt-[26px] w-[48px] text-right font-['Liberation_Sans',sans-serif] text-[18px] leading-[18px]">er</p>
            <p className="w-[43px] text-right font-['Liberation_Sans',sans-serif] text-[12px]">H</p>
          </div>
          <AnalysisWindow />
          <DatasheetWindow />
        </div>
        <div className="flex flex-col items-start justify-between border-l border-white">
          <Arrow dir="up" /><Arrow dir="down" />
        </div>
        <div className="flex items-start justify-between border-t border-white">
          <Arrow dir="left" /><Arrow dir="right" />
        </div>
      </main>
      <footer className="flex h-[21px] shrink-0 border-t-2 border-[#9a9da3]">
        <div className="w-[147px] border-r-2 border-b-2 border-l-[3px] border-r-[#b5b5b5] border-b-[#b5b5b5] border-l-[#3535ff] bg-[#e3e3e3]" />
      </footer>
    </div>
  );
}
